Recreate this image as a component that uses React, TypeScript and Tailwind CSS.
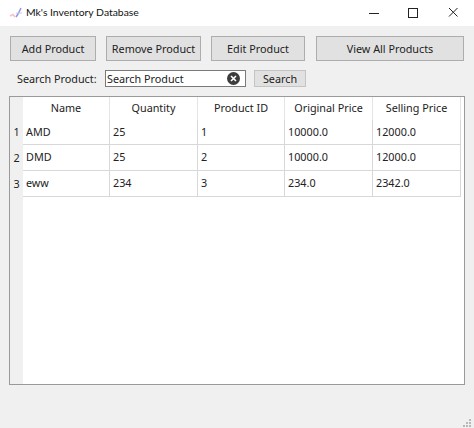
const columns = [
  { label: 'Name', width: 'w-[87px]' },
  { label: 'Quantity', width: 'w-[88px]' },
  { label: 'Product ID', width: 'w-[87px]' },
  { label: 'Original Price', width: 'w-[88px]' },
  { label: 'Selling Price', width: 'w-[88px]' },
]

const rows = [
  { id: 1, height: 'h-[25px]', cells: ['AMD', '25', '1', '10000.0', '12000.0'] },
  { id: 2, height: 'h-[26px]', cells: ['DMD', '25', '2', '10000.0', '12000.0'] },
  { id: 3, height: 'h-[26px]', cells: ['eww', '234', '3', '234.0', '2342.0'] },
]

function ToolButton({ label, width }: { label: string; width: string }) {
  return (
    <button className={`${width} h-[25px] border border-[#adadad] bg-[#e1e1e1] pt-[1px] text-[10.8px] text-[#222]`}>
      {label}
    </button>
  )
}

export default function App() {
  return (
    <div className="flex h-[428px] w-[474px] flex-col overflow-hidden bg-[#f0f0f0] font-['Noto_Sans',sans-serif] text-[10.8px] text-[#222]">
      <div className="flex h-[26px] shrink-0 items-center bg-white pl-[9px]">
        <svg width="16" height="16" viewBox="0 0 16 16" fill="none">
          <path d="M1 11 L4 9.5 L6 12" stroke="#f3c3c8" strokeWidth="1.6" />
          <path d="M7 12 L9 9 L12 3" stroke="#8f98dc" strokeWidth="1.5" />
          <path d="M7 8 L13 8" stroke="#c3c7ec" strokeWidth="1" />
        </svg>
        <span className="ml-[1px] font-['Lato',sans-serif] text-[10.4px] text-[#111]">Mk's Inventory Database</span>
        <div className="ml-auto flex items-center">
          <svg width="39" height="26" viewBox="0 0 39 26" fill="none" stroke="#222">
            <path d="M17 13.5 H27" />
          </svg>
          <svg width="41" height="26" viewBox="0 0 41 26" fill="none" stroke="#222">
            <rect x="17.5" y="8.5" width="9" height="9" />
          </svg>
          <svg width="42" height="26" viewBox="0 0 42 26" fill="none" stroke="#222">
            <path d="M17 8 L25.5 16.5 M25.5 8 L17 16.5" />
          </svg>
        </div>
      </div>

      <div className="flex gap-[10px] pl-[10px] pt-[10px]">
        <ToolButton label="Add Product" width="w-[86px]" />
        <ToolButton label="Remove Product" width="w-[95px]" />
        <ToolButton label="Edit Product" width="w-[94px]" />
        <ToolButton label="View All Products" width="ml-[1px] w-[148px]" />
      </div>

      <div className="ml-[17px] mt-[9px] flex h-[17px] items-center">
        <span className="w-[88px] whitespace-nowrap pt-[2px]">Search Product:</span>
        <div className="flex h-[17px] w-[141px] items-center justify-between border border-[#7a7a7a] bg-white pl-[1px] pr-[5px]">
          <span className="pt-[1px]">Search Product</span>
          <span className="flex h-[13px] w-[13px] items-center justify-center rounded-full bg-[#3c3c3c]">
            <svg width="7" height="7" viewBox="0 0 7 7" stroke="#fff" strokeWidth="1.6">
              <path d="M1 1 L6 6 M6 1 L1 6" />
            </svg>
          </span>
        </div>
        <button className="ml-[8px] h-[17px] w-[52px] border border-[#c4c4c4] bg-[#e1e1e1] text-[10.8px] text-[#222]">
          Search
        </button>
      </div>

      <div className="ml-[9px] mt-[9px] flex h-[289px] w-[456px] flex-col border border-[#9a9a9a] bg-white">
        <div className="flex h-[23px] shrink-0">
          <div className="w-[13px] bg-[#f0f0f0]" />
          {columns.map((col) => (
            <div key={col.label} className={`${col.width} flex items-center justify-center border-r border-[#e5e5e5]`}>
              {col.label}
            </div>
          ))}
        </div>
        {rows.map((row) => (
          <div key={row.id} className={`flex shrink-0 ${row.height}`}>
            <div className="flex w-[13px] items-center justify-center bg-[#f0f0f0]">{row.id}</div>
            {row.cells.map((cell, i) => (
              <div
                key={i}
                className={`${columns[i].width} flex items-center border-b border-r border-[#d8d8d8] pl-[3px]`}
              >
                {cell}
              </div>
            ))}
          </div>
        ))}
        <div className="w-[13px] flex-1 bg-[#f0f0f0]" />
      </div>

      <div className="mr-[2px] mt-auto flex justify-end">
        <svg width="10" height="10" viewBox="0 0 10 10" fill="#b8b8b8">
          <rect x="7" y="1" width="2" height="2" />
          <rect x="4" y="4" width="2" height="2" />
          <rect x="7" y="4" width="2" height="2" />
          <rect x="1" y="7" width="2" height="2" />
          <rect x="4" y="7" width="2" height="2" />
          <rect x="7" y="7" width="2" height="2" />
        </svg>
      </div>
    </div>
  )
}
